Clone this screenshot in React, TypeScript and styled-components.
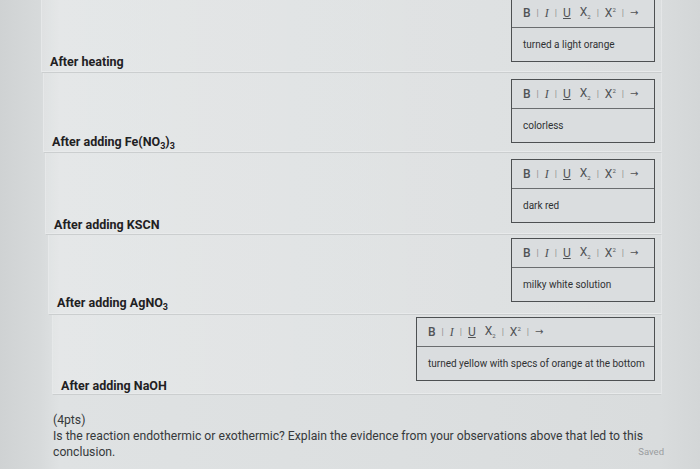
import React from "react";
import styled, { createGlobalStyle } from "styled-components";

const Global = createGlobalStyle`
  html, body { margin: 0; padding: 0; }
  body {
    width: 700px;
    height: 469px;
    overflow: hidden;
    background: #d3d6d7;
    font-family: Roboto, "Liberation Sans", Arial, sans-serif;
  }
`;

const Page = styled.div`
  position: relative;
  width: 700px;
  height: 469px;
  overflow: hidden;
  display: flex;
  flex-direction: column;
  background: linear-gradient(90deg, #cfd2d3 0px, #d7dadb 40px, #dfe2e3 60px, #dcdfe0 400px, #d9dcdd 660px, #d3d6d7 700px);
`;

const Table = styled.div`
  margin-top: -8px;
  width: 662px;
  display: flex;
  flex-direction: column;
`;

const Row = styled.div<{ $shift: number; $h: number }>`
  height: ${(p) => p.$h}px;
  box-sizing: border-box;
  margin-left: ${(p) => 41 + p.$shift}px;
  display: flex;
  align-items: flex-start;
  border-left: 1px solid #e6e8e9;
  border-right: 1px solid #e4e6e7;
  border-bottom: 1px solid #cbcecf;
  box-shadow: inset 0 -1px 0 #e8eaeb;
  background: linear-gradient(90deg, rgba(255,255,255,0.18), rgba(255,255,255,0.06));
`;

const Label = styled.div<{ $top: number }>`
  flex: 1;
  padding-left: 8px;
  padding-top: ${(p) => p.$top}px;
  font-size: 12.5px;
  font-weight: 700;
  color: #1f2123;
  white-space: nowrap;
  sub { font-size: 9px; vertical-align: -3px; line-height: 0; }
`;

const Editor = styled.div<{ $w: number; $top: number }>`
  width: ${(p) => p.$w}px;
  margin-top: ${(p) => p.$top}px;
  margin-right: 6px;
  box-sizing: border-box;
  border: 1.5px solid #4d5052;
  background: #dadddf;
  display: flex;
  flex-direction: column;
`;

const Toolbar = styled.div`
  height: 29px;
  box-sizing: border-box;
  border-bottom: 1.5px solid #6a6d6f;
  display: flex;
  align-items: center;
  padding-left: 11px;
  font-size: 12px;
  color: #505356;
  gap: 6px;
`;

const Tool = styled.span<{ $kind?: "b" | "i" | "u" }>`
  font-weight: ${(p) => (p.$kind === "b" ? 500 : 400)};
  font-style: ${(p) => (p.$kind === "i" ? "italic" : "normal")};
  text-decoration: ${(p) => (p.$kind === "u" ? "underline" : "none")};
  font-family: ${(p) => (p.$kind === "i" ? '"Liberation Serif", serif' : "inherit")};
  sub, sup { font-size: 6px; }
`;

const Arrow = styled.span`
  font-family: "DejaVu Sans", sans-serif;
  font-size: 10px;
  margin-top: -1px;
`;

const Sep = styled.span`
  color: #8a8d90;
  font-size: 9px;
`;

const Content = styled.div`
  height: 33px;
  display: flex;
  align-items: flex-start;
  padding: 11px 0 0 11px;
  box-sizing: border-box;
  font-size: 10px;
  line-height: 12px;
  color: #2f3133;
`;

const Question = styled.div`
  margin-left: 53px;
  margin-top: 18px;
  width: 611px;
  display: flex;
  flex-direction: column;
  font-size: 12.2px;
  line-height: 15.5px;
  color: #36393b;
`;

const Line = styled.div`
  white-space: nowrap;
`;

const LastLine = styled.div`
  display: flex;
  align-items: flex-end;
  justify-content: space-between;
`;

const Saved = styled.span`
  font-size: 9.5px;
  color: #9a9d9f;
  padding-bottom: 1px;
`;

const NextEditor = styled.div`
  margin-top: 8px;
  margin-left: 513px;
  width: 150px;
  height: 4px;
  border-top: 2px solid #5a5d5f;
  background: #d5d8d9;
`;

const BottomStrip = styled.div`
  flex: 1;
  background: #bfc2c3;
`;

function Bar() {
  return (
    <Toolbar>
      <Tool $kind="b">B</Tool>
      <Sep>|</Sep>
      <Tool $kind="i">I</Tool>
      <Sep>|</Sep>
      <Tool $kind="u">U</Tool>
      <Tool>&nbsp;X<sub>2</sub></Tool>
      <Sep>|</Sep>
      <Tool>X<sup>2</sup></Tool>
      <Sep>|</Sep>
      <Arrow>→</Arrow>
    </Toolbar>
  );
}

const rows = [
  { label: <>After heating</>, text: "turned a light orange", shift: 0, h: 81, w: 144, top: 6, lt: 62 },
  { label: <>After adding Fe(NO<sub>3</sub>)<sub>3</sub></>, text: "colorless", shift: 2, h: 80, w: 144, top: 6, lt: 61 },
  { label: <>After adding KSCN</>, text: "dark red", shift: 4, h: 82, w: 144, top: 6, lt: 64 },
  { label: <>After adding AgNO<sub>3</sub></>, text: "milky white solution", shift: 7, h: 80, w: 144, top: 3, lt: 60 },
  { label: <>After adding NaOH</>, text: "turned yellow with specs of orange at the bottom", shift: 11, h: 80, w: 239, top: 2, lt: 63 },
];

export default function App() {
  return (
    <>
      <Global />
      <Page>
        <Table>
          {rows.map((r, i) => (
            <Row key={i} $shift={r.shift} $h={r.h}>
              <Label $top={r.lt}>{r.label}</Label>
              <Editor $w={r.w} $top={r.top}>
                <Bar />
                <Content>{r.text}</Content>
              </Editor>
            </Row>
          ))}
        </Table>
        <Question>
          <Line>(4pts)</Line>
          <Line>Is the reaction endothermic or exothermic? Explain the evidence from your observations above that led to this</Line>
          <LastLine>
            <span>conclusion.</span>
            <Saved>Saved</Saved>
          </LastLine>
        </Question>
        <NextEditor />
        <BottomStrip />
      </Page>
    </>
  );
}
